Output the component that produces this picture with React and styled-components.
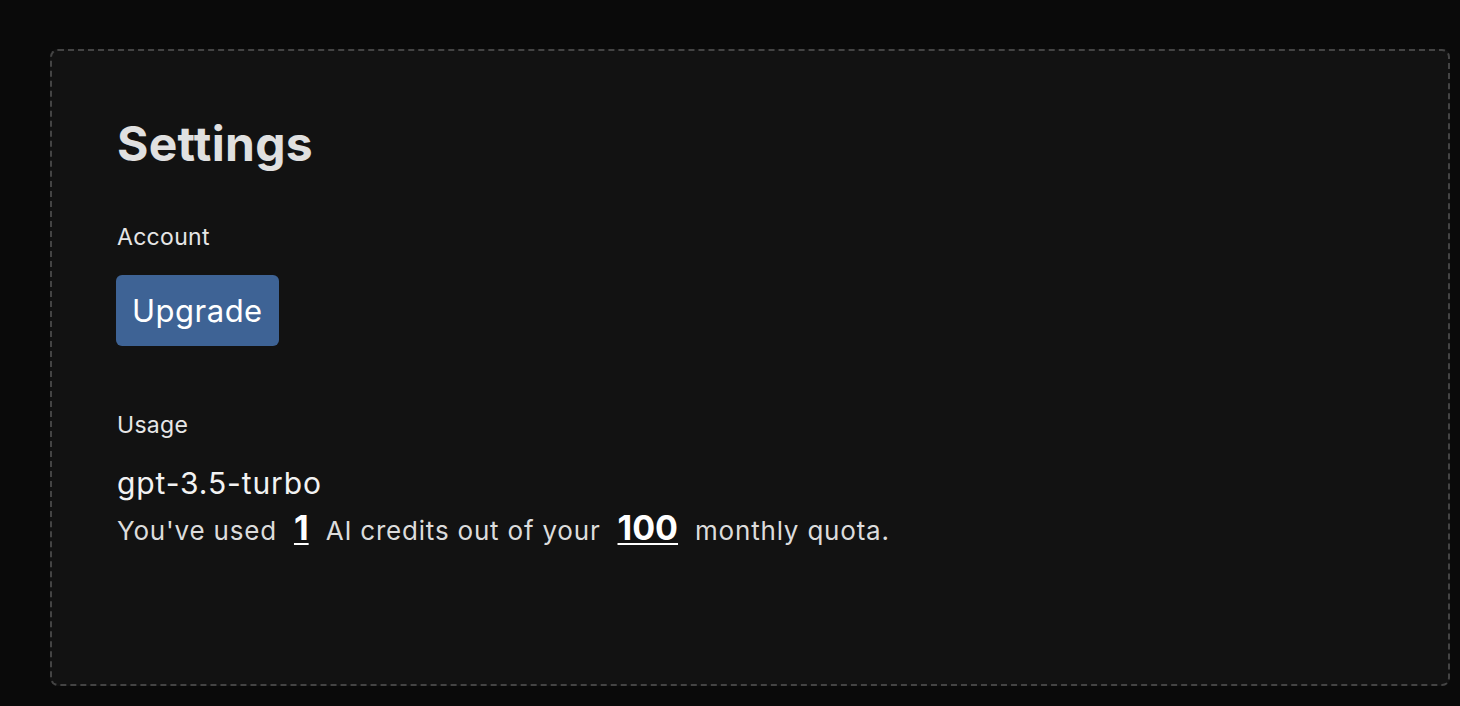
import React from 'react';
import styled, { createGlobalStyle } from 'styled-components';

const GlobalStyle = createGlobalStyle`
	html, body {
		margin: 0;
		padding: 0;
		background: #0a0a0a;
		font-family: Inter, 'Liberation Sans', sans-serif;
		color: #e2e2e2;
	}
`;

const Panel = styled.div`
	box-sizing: border-box;
	height: 637px;
	margin: 49px 10px 20px 50px;
	padding: 64px 65px;
	border: 2px dashed #444444;
	border-radius: 8px;
	background: #121212;
	display: flex;
	flex-direction: column;
	align-items: flex-start;
`;

const Title = styled.h1`
	margin: 0;
	font-size: 48px;
	line-height: 58px;
	font-weight: 700;
	letter-spacing: 0.3px;
	color: #e0e0e0;
`;

const Label = styled.div`
	margin-top: ${({ $top }) => $top}px;
	font-size: 23px;
	line-height: 26px;
	letter-spacing: 0.3px;
	color: #e6e6e6;
`;

const UpgradeButton = styled.button`
	margin-top: 25px;
	margin-left: -1px;
	height: 71px;
	padding: 0 16px;
	border: none;
	border-radius: 6px;
	background: #3e6395;
	color: #ffffff;
	font-family: inherit;
	font-size: 31px;
	letter-spacing: 0.5px;
	cursor: pointer;
`;

const Model = styled.div`
	margin-top: 28px;
	font-size: 30px;
	line-height: 34px;
	letter-spacing: 0.9px;
	color: #f2f2f2;
`;

const Quota = styled.div`
	margin-top: 11px;
	font-size: 26px;
	line-height: 32px;
	letter-spacing: 0.8px;
	color: #dcdcdc;
`;

const Num = styled.span`
	margin: 0 17px;
	font-size: 34px;
	line-height: 1;
	font-weight: 700;
	letter-spacing: 0;
	text-decoration: underline;
	text-underline-offset: 3px;
	text-decoration-thickness: 2px;
	color: #ffffff;
`;

const App = () => {
	const used = 1;
	const quota = 100;
	return (
		<>
			<GlobalStyle />
			<Panel>
				<Title>Settings</Title>
				<Label $top={51}>Account</Label>
				<UpgradeButton>Upgrade</UpgradeButton>
				<Label $top={66}>Usage</Label>
				<Model>gpt-3.5-turbo</Model>
				<Quota>
					You've used<Num>{used}</Num>AI credits out of your<Num>{quota}</Num>monthly quota.
				</Quota>
			</Panel>
		</>
	);
};

export default App;
